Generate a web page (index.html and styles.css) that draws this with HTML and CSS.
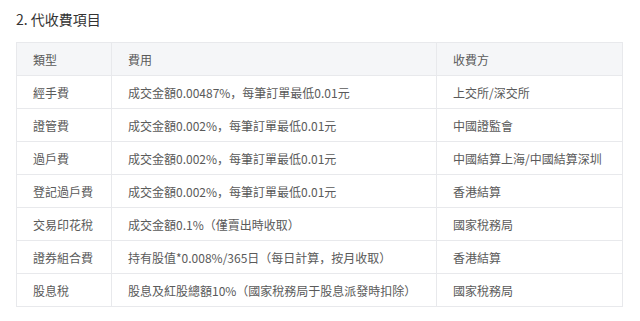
FILE: index.html
```html
<!DOCTYPE html>
<html lang="zh-CN">
<head>
<meta charset="utf-8">
<link rel="stylesheet" href="styles.css">
</head>
<body>
<div class="page">
  <h2 class="title">2. 代收費項目</h2>
  <table class="fees">
    <colgroup>
      <col class="c1"><col class="c2"><col class="c3">
    </colgroup>
    <thead>
      <tr><th>類型</th><th>費用</th><th>收費方</th></tr>
    </thead>
    <tbody>
      <tr><td>經手費</td><td>成交金額0.00487%，每筆訂單最低0.01元</td><td>上交所/深交所</td></tr>
      <tr><td>證管費</td><td>成交金額0.002%，每筆訂單最低0.01元</td><td>中國證監會</td></tr>
      <tr><td>過戶費</td><td>成交金額0.002%，每筆訂單最低0.01元</td><td>中國結算上海/中國結算深圳</td></tr>
      <tr><td>登記過戶費</td><td>成交金額0.002%，每筆訂單最低0.01元</td><td>香港結算</td></tr>
      <tr><td>交易印花稅</td><td>成交金額0.1%（僅賣出時收取）</td><td>國家稅務局</td></tr>
      <tr><td>證券組合費</td><td>持有股值*0.008%/365日（每日計算，按月收取）</td><td>香港結算</td></tr>
      <tr><td>股息稅</td><td>股息及紅股總額10%（國家稅務局于股息派發時扣除）</td><td>國家稅務局</td></tr>
    </tbody>
  </table>
</div>
</body>
</html>
```

FILE: styles.css
```css
html, body {
  margin: 0;
  padding: 0;
  background: #ffffff;
}
body {
  font-family: "Noto Sans CJK SC", "Noto Sans", sans-serif;
}
.page {
  padding: 7px 16px 0 16px;
}
.title {
  margin: 0 0 11px 0;
  font-size: 14px;
  line-height: 24px;
  font-weight: 400;
  color: #333333;
}
.fees {
  width: 606px;
  border-collapse: collapse;
  table-layout: fixed;
  font-size: 12px;
  color: #5a5a5a;
}
.c1 { width: 95px; }
.c2 { width: 325px; }
.c3 { width: 186px; }
.fees th,
.fees td {
  height: 33px;
  padding: 0 0 0 16px;
  border: 1px solid #e8e9ec;
  text-align: left;
  font-weight: 400;
  white-space: nowrap;
  vertical-align: middle;
  box-sizing: border-box;
}
.fees th {
  background: #f5f6f8;
}
```
